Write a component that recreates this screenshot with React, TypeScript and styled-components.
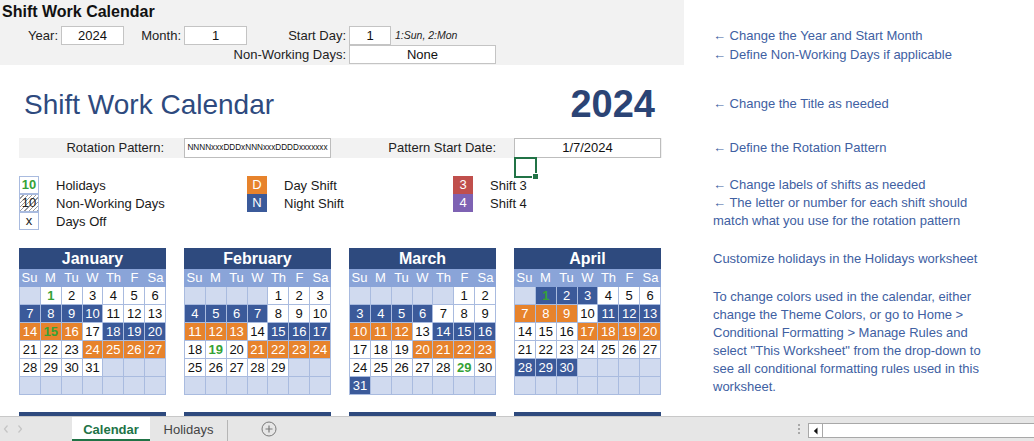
import React from "react";
import styled, { createGlobalStyle, css } from "styled-components";

const GlobalStyle = createGlobalStyle`
  html, body { margin: 0; padding: 0; background: #ffffff; }
  body { font-family: "Liberation Sans", Arial, sans-serif; color: #1a1a1a; }
  * { box-sizing: border-box; }
`;

const COLORS = {
  navy: "#2E4A7E",
  weekday: "#8AA4D8",
  empty: "#D0DAEF",
  grid: "#A9BBDF",
  night: "#3B5A9A",
  day: "#E7832C",
  red: "#C04F4C",
  purple: "#7E62B3",
  green: "#35A236",
  note: "#4060A2",
  excelGreen: "#217346",
};

const YEAR = 2024;
const PATTERN = "NNNNxxxDDDxNNNxxxDDDDxxxxxxx";
const PATTERN_START = Date.UTC(2024, 0, 7);
const HOLIDAYS = new Set([
  "0-1", "0-15", "1-19", "2-29", "3-1", "4-27", "6-4", "8-2", "10-28", "11-25",
]);
const MONTHS = [
  "January", "February", "March", "April", "May", "June",
  "July", "August", "September", "October", "November", "December",
];
const WEEKDAYS = ["Su", "M", "Tu", "W", "Th", "F", "Sa"];

type CellKind = "empty" | "plain" | "N" | "D";
interface DayCell {
  key: string;
  day?: number;
  kind: CellKind;
  holiday: boolean;
}

function buildMonth(month: number): DayCell[] {
  const first = new Date(YEAR, month, 1).getDay();
  const count = new Date(YEAR, month + 1, 0).getDate();
  const cells: DayCell[] = [];
  for (let i = 0; i < 42; i++) {
    const day = i - first + 1;
    if (day < 1 || day > count) {
      cells.push({ key: `e${i}`, kind: "empty", holiday: false });
      continue;
    }
    const diff = Math.round((Date.UTC(YEAR, month, day) - PATTERN_START) / 86400000);
    const letter = diff < 0 ? "x" : PATTERN[diff % PATTERN.length];
    const kind: CellKind = letter === "N" ? "N" : letter === "D" ? "D" : "plain";
    cells.push({ key: `d${day}`, day, kind, holiday: HOLIDAYS.has(`${month}-${day}`) });
  }
  return cells;
}

/* ---------- frame ---------- */

const Frame = styled.div`
  width: 1034px;
  height: 441px;
  display: flex;
  flex-direction: column;
  overflow: hidden;
`;

const Content = styled.div`
  flex: 1;
  min-height: 0;
  display: flex;
  overflow: hidden;
`;

const Sheet = styled.div`
  width: 684px;
  flex: none;
  position: relative;
  display: flex;
  flex-direction: column;
  & > * {
    flex-shrink: 0;
  }
`;

/* ---------- top parameter band ---------- */

const TopBand = styled.div`
  height: 65px;
  background: #f2f2f2;
  display: flex;
  flex-direction: column;
`;

const AppTitle = styled.div`
  height: 26px;
  padding: 2px 0 0 2px;
  font-size: 16px;
  line-height: 20px;
  font-weight: bold;
  color: #111;
`;

const ParamRow = styled.div`
  height: 19px;
  display: flex;
  align-items: stretch;
`;

const ParamLabel = styled.span<{ $w: number }>`
  width: ${(p) => p.$w}px;
  flex: none;
  padding-right: 3px;
  text-align: right;
  font-size: 13px;
  line-height: 19px;
  color: #222;
`;

const ParamField = styled.div<{ $w: number }>`
  width: ${(p) => p.$w}px;
  flex: none;
  background: #fff;
  border: 1px solid #c4c4c4;
  text-align: center;
  font-size: 13px;
  line-height: 17px;
  color: #111;
`;

const Hint = styled.span`
  margin-left: 4px;
  font-size: 10.5px;
  font-style: italic;
  line-height: 19px;
  color: #222;
`;

/* ---------- title ---------- */

const TitleRow = styled.div`
  height: 73px;
  padding: 6px 29px 0 24px;
  display: flex;
  align-items: center;
  justify-content: space-between;
`;

const BigTitle = styled.h1`
  margin: 0;
  font-size: 28px;
  font-weight: normal;
  color: ${COLORS.navy};
`;

const BigYear = styled.div`
  font-size: 38px;
  font-weight: bold;
  color: #2B4475;
`;

/* ---------- pattern row ---------- */

const PatternRow = styled.div`
  margin-left: 19px;
  width: 643px;
  height: 20px;
  background: #f2f2f2;
  display: flex;
  align-items: stretch;
`;

const PatternLabel = styled.span<{ $w: number; $pad: number }>`
  width: ${(p) => p.$w}px;
  flex: none;
  padding-right: ${(p) => p.$pad}px;
  text-align: right;
  font-size: 13px;
  line-height: 20px;
  color: #222;
`;

const PatternBox = styled.div<{ $size: number }>`
  width: 147px;
  flex: none;
  background: #fff;
  border: 1px solid #bdbdbd;
  text-align: center;
  font-size: ${(p) => p.$size}px;
  line-height: 18px;
  color: #111;
  white-space: nowrap;
  overflow: hidden;
`;

const Selection = styled.div`
  position: absolute;
  left: 514px;
  top: 157px;
  width: 23px;
  height: 21px;
  border: 2px solid ${COLORS.excelGreen};
  pointer-events: none;
  &::after {
    content: "";
    position: absolute;
    right: -4px;
    bottom: -4px;
    width: 5px;
    height: 5px;
    background: ${COLORS.excelGreen};
    border: 1px solid #fff;
  }
`;

/* ---------- legend ---------- */

const Legend = styled.div`
  margin: 18px 0 0 19px;
  display: flex;
`;

const LegendColumn = styled.div<{ $w: number }>`
  width: ${(p) => p.$w}px;
  display: flex;
  flex-direction: column;
`;

const LegendItem = styled.div`
  height: 18px;
  display: flex;
  align-items: center;
`;

type SwatchKind = "holiday" | "nonwork" | "off" | "D" | "N" | "s3" | "s4";

const swatchStyles: Record<SwatchKind, ReturnType<typeof css>> = {
  holiday: css`
    background: #fff;
    border-color: ${COLORS.grid};
    color: ${COLORS.green};
    font-weight: bold;
  `,
  nonwork: css`
    background: repeating-linear-gradient(135deg, #ffffff 0 2px, #9a9a9a 2px 3px);
    border-color: ${COLORS.grid};
    color: #222;
  `,
  off: css`
    background: #fff;
    border-color: ${COLORS.grid};
    color: #222;
  `,
  D: css`
    background: ${COLORS.day};
    border-color: ${COLORS.day};
    color: #fff;
  `,
  N: css`
    background: ${COLORS.night};
    border-color: ${COLORS.night};
    color: #fff;
  `,
  s3: css`
    background: ${COLORS.red};
    border-color: ${COLORS.red};
    color: #fff;
  `,
  s4: css`
    background: ${COLORS.purple};
    border-color: ${COLORS.purple};
    color: #fff;
  `,
};

const Swatch = styled.span<{ $kind: SwatchKind }>`
  width: 20px;
  height: 18px;
  flex: none;
  border: 1px solid;
  text-align: center;
  font-size: 13px;
  line-height: 16px;
  ${(p) => swatchStyles[p.$kind]}
`;

const LegendText = styled.span`
  margin-left: 17px;
  font-size: 13px;
  color: #1a1a1a;
`;

/* ---------- months ---------- */

const MonthsGrid = styled.div`
  margin: 18px 0 0 19px;
  display: grid;
  grid-template-columns: repeat(4, 147px);
  column-gap: 18px;
  row-gap: 17px;
`;

const Month = styled.div`
  width: 147px;
`;

const MonthHeader = styled.div`
  height: 21px;
  background: ${COLORS.navy};
  color: #fff;
  font-size: 16px;
  font-weight: bold;
  line-height: 21px;
  text-align: center;
`;

const WeekRow = styled.div`
  height: 18px;
  background: ${COLORS.weekday};
  display: grid;
  grid-template-columns: repeat(7, 1fr);
`;

const WeekLabel = styled.span`
  color: #fff;
  font-size: 13px;
  line-height: 18px;
  text-align: center;
`;

const DayGrid = styled.div`
  display: grid;
  grid-template-columns: repeat(7, 1fr);
  grid-auto-rows: 18px;
  border-left: 1px solid ${COLORS.grid};
`;

const cellBg: Record<CellKind, string> = {
  empty: COLORS.empty,
  plain: "#ffffff",
  N: COLORS.night,
  D: COLORS.day,
};

const Day = styled.span<{ $kind: CellKind; $holiday: boolean }>`
  background: ${(p) => cellBg[p.$kind]};
  border-right: 1px solid ${COLORS.grid};
  border-bottom: 1px solid ${COLORS.grid};
  text-align: center;
  font-size: 13px;
  line-height: 17px;
  color: ${(p) =>
    p.$holiday ? COLORS.green : p.$kind === "plain" ? "#111" : "#fff"};
  font-weight: ${(p) => (p.$holiday ? "bold" : "normal")};
`;

/* ---------- notes ---------- */

const Notes = styled.div`
  flex: 1;
  padding-left: 29px;
  display: flex;
  flex-direction: column;
  & > * {
    flex-shrink: 0;
  }
`;

const NoteLine = styled.div<{ $mt: number }>`
  margin-top: ${(p) => p.$mt}px;
  height: 18px;
  font-size: 13px;
  line-height: 18px;
  color: ${COLORS.note};
  white-space: nowrap;
`;

/* ---------- tab bar ---------- */

const TabBar = styled.div`
  height: 25px;
  flex: none;
  background: #e6e6e6;
  border-top: 1px solid #c8c8c8;
  display: flex;
  align-items: stretch;
`;

const NavArrows = styled.div`
  width: 72px;
  display: flex;
  align-items: center;
  gap: 6px;
  padding-left: 2px;
`;

const Tab = styled.div<{ $active?: boolean }>`
  width: 78px;
  text-align: center;
  font-size: 13px;
  line-height: 19px;
  ${(p) =>
    p.$active
      ? css`
          padding-top: 3px;
          background: #fff;
          color: ${COLORS.excelGreen};
          font-weight: bold;
          border-bottom: 2px solid ${COLORS.excelGreen};
        `
      : css`
          margin-top: 3px;
          color: #444;
          border-right: 1px solid #b5b5b5;
        `}
`;

const AddSheet = styled.div`
  margin-left: 33px;
  display: flex;
  align-items: center;
`;

const Spacer = styled.div`
  flex: 1;
`;

const Grip = styled.div`
  width: 16px;
  display: flex;
  flex-direction: column;
  align-items: center;
  justify-content: center;
  gap: 2px;
  & > i {
    width: 2px;
    height: 2px;
    background: #a8a8a8;
    display: block;
  }
`;

const HScroll = styled.div`
  width: 226px;
  margin: 6px 0 3px 1px;
  background: #fff;
  border: 1px solid #a8a8a8;
  border-right: none;
  display: flex;
`;

const ScrollArrow = styled.div`
  width: 14px;
  border-right: 1px solid #a8a8a8;
  display: flex;
  align-items: center;
  justify-content: center;
`;

/* ---------- component ---------- */

const NOTES: { text: string; mt: number }[] = [
  { text: "← Change the Year and Start Month", mt: 27 },
  { text: "← Define Non-Working Days if applicable", mt: 1 },
  { text: "← Change the Title as needed", mt: 31 },
  { text: "← Define the Rotation Pattern", mt: 26 },
  { text: "← Change labels of shifts as needed", mt: 19 },
  { text: "← The letter or number for each shift should", mt: 0 },
  { text: "match what you use for the rotation pattern", mt: 0 },
  { text: "Customize holidays in the Holidays worksheet", mt: 20 },
  { text: "To change colors used in the calendar, either", mt: 20 },
  { text: "change the Theme Colors, or go to Home >", mt: 0 },
  { text: "Conditional Formatting > Manage Rules and", mt: 0 },
  { text: "select \"This Worksheet\" from the drop-down to", mt: 0 },
  { text: "see all conditional formatting rules used in this", mt: 0 },
  { text: "worksheet.", mt: 0 },
];

function MonthCalendar({ month }: { month: number }) {
  return (
    <Month>
      <MonthHeader>{MONTHS[month]}</MonthHeader>
      <WeekRow>
        {WEEKDAYS.map((w) => (
          <WeekLabel key={w}>{w}</WeekLabel>
        ))}
      </WeekRow>
      <DayGrid>
        {buildMonth(month).map((c) => (
          <Day key={c.key} $kind={c.kind} $holiday={c.holiday}>
            {c.day ?? ""}
          </Day>
        ))}
      </DayGrid>
    </Month>
  );
}

export default function App() {
  return (
    <>
      <GlobalStyle />
      <Frame>
        <Content>
          <Sheet>
            <TopBand>
              <AppTitle>Shift Work Calendar</AppTitle>
              <ParamRow>
                <ParamLabel $w={61}>Year:</ParamLabel>
                <ParamField $w={63}>2024</ParamField>
                <ParamLabel $w={60}>Month:</ParamLabel>
                <ParamField $w={63}>1</ParamField>
                <ParamLabel $w={102}>Start Day:</ParamLabel>
                <ParamField $w={42}>1</ParamField>
                <Hint>1:Sun, 2:Mon</Hint>
              </ParamRow>
              <ParamRow>
                <ParamLabel $w={349}>Non-Working Days:</ParamLabel>
                <ParamField $w={147}>None</ParamField>
              </ParamRow>
            </TopBand>

            <TitleRow>
              <BigTitle>Shift Work Calendar</BigTitle>
              <BigYear>2024</BigYear>
            </TitleRow>

            <PatternRow>
              <PatternLabel $w={165} $pad={20}>Rotation Pattern:</PatternLabel>
              <PatternBox $size={8.2}>{PATTERN}</PatternBox>
              <PatternLabel $w={183} $pad={18}>Pattern Start Date:</PatternLabel>
              <PatternBox $size={13}>1/7/2024</PatternBox>
            </PatternRow>
            <Selection />

            <Legend>
              <LegendColumn $w={228}>
                <LegendItem>
                  <Swatch $kind="holiday">10</Swatch>
                  <LegendText>Holidays</LegendText>
                </LegendItem>
                <LegendItem>
                  <Swatch $kind="nonwork">10</Swatch>
                  <LegendText>Non-Working Days</LegendText>
                </LegendItem>
                <LegendItem>
                  <Swatch $kind="off">x</Swatch>
                  <LegendText>Days Off</LegendText>
                </LegendItem>
              </LegendColumn>
              <LegendColumn $w={206}>
                <LegendItem>
                  <Swatch $kind="D">D</Swatch>
                  <LegendText>Day Shift</LegendText>
                </LegendItem>
                <LegendItem>
                  <Swatch $kind="N">N</Swatch>
                  <LegendText>Night Shift</LegendText>
                </LegendItem>
              </LegendColumn>
              <LegendColumn $w={180}>
                <LegendItem>
                  <Swatch $kind="s3">3</Swatch>
                  <LegendText>Shift 3</LegendText>
                </LegendItem>
                <LegendItem>
                  <Swatch $kind="s4">4</Swatch>
                  <LegendText>Shift 4</LegendText>
                </LegendItem>
              </LegendColumn>
            </Legend>

            <MonthsGrid>
              {[0, 1, 2, 3].map((m) => (
                <MonthCalendar key={m} month={m} />
              ))}
              {[4, 5, 6, 7].map((m) => (
                <Month key={m}>
                  <MonthHeader>{MONTHS[m]}</MonthHeader>
                </Month>
              ))}
            </MonthsGrid>
          </Sheet>

          <Notes>
            {NOTES.map((n, i) => (
              <NoteLine key={i} $mt={n.mt}>
                {n.text}
              </NoteLine>
            ))}
          </Notes>
        </Content>

        <TabBar>
          <NavArrows>
            <svg width="8" height="10" viewBox="0 0 8 10">
              <path d="M5.5 1.5 L2.5 5 L5.5 8.5" fill="none" stroke="#c4c4c4" strokeWidth="1.2" />
            </svg>
            <svg width="8" height="10" viewBox="0 0 8 10">
              <path d="M2.5 1.5 L5.5 5 L2.5 8.5" fill="none" stroke="#c4c4c4" strokeWidth="1.2" />
            </svg>
          </NavArrows>
          <Tab $active>Calendar</Tab>
          <Tab>Holidays</Tab>
          <AddSheet>
            <svg width="16" height="16" viewBox="0 0 16 16">
              <circle cx="8" cy="8" r="7" fill="none" stroke="#7a7a7a" strokeWidth="1" />
              <path d="M8 4.5 V11.5 M4.5 8 H11.5" stroke="#7a7a7a" strokeWidth="1.2" />
            </svg>
          </AddSheet>
          <Spacer />
          <Grip>
            <i />
            <i />
            <i />
          </Grip>
          <HScroll>
            <ScrollArrow>
              <svg width="6" height="8" viewBox="0 0 6 8">
                <path d="M4.5 0.5 L0.8 4 L4.5 7.5 Z" fill="#111" />
              </svg>
            </ScrollArrow>
          </HScroll>
        </TabBar>
      </Frame>
    </>
  );
}
